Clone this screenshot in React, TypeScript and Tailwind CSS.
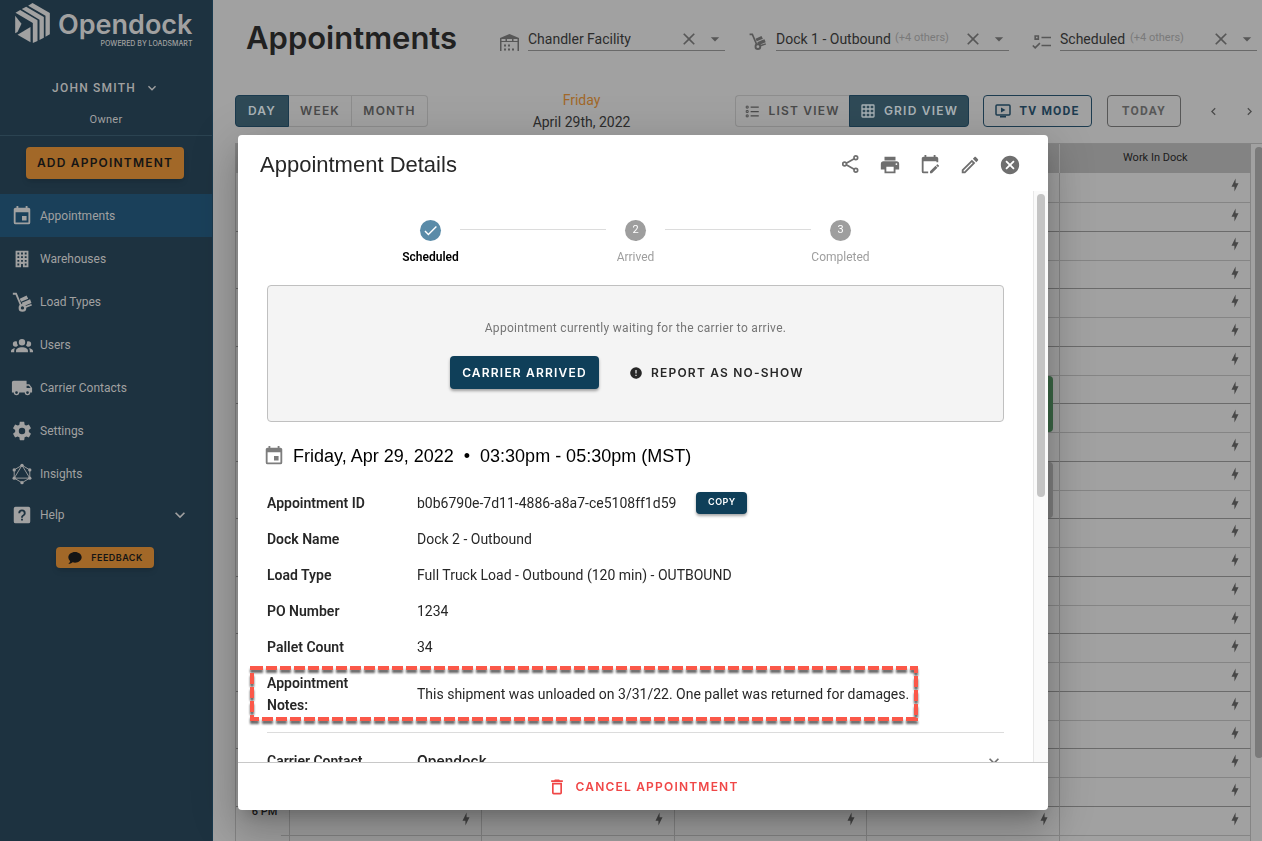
import React, { useState } from 'react';

const paths = {
  calendar: 'M19,19H5V8H19M16,1V3H8V1H6V3H5C3.89,3 3,3.89 3,5V19A2,2 0 0,0 5,21H19A2,2 0 0,0 21,19V5C21,3.89 20.1,3 19,3H18V1M17,12H12V17H17V12Z',
  building: 'M5,3V21H11V17.5H13V21H19V3H5M7,5H9V7H7V5M11,5H13V7H11V5M15,5H17V7H15V5M7,9H9V11H7V9M11,9H13V11H11V9M15,9H17V11H15V9M7,13H9V15H7V13M11,13H13V15H11V13M15,13H17V15H15V13M7,17H9V19H7V17M15,17H17V19H15V17Z',
  users: 'M12,5.5A3.5,3.5 0 0,1 15.5,9A3.5,3.5 0 0,1 12,12.5A3.5,3.5 0 0,1 8.5,9A3.5,3.5 0 0,1 12,5.5M5,8C5.56,8 6.08,8.15 6.53,8.42C6.38,9.85 6.8,11.27 7.66,12.38C7.16,13.34 6.16,14 5,14A3,3 0 0,1 2,11A3,3 0 0,1 5,8M19,8A3,3 0 0,1 22,11A3,3 0 0,1 19,14C17.84,14 16.84,13.34 16.34,12.38C17.2,11.27 17.62,9.85 17.47,8.42C17.92,8.15 18.44,8 19,8M5.5,18.25C5.5,16.18 8.41,14.5 12,14.5C15.59,14.5 18.5,16.18 18.5,18.25V20H5.5V18.25M0,20V18.5C0,17.11 1.89,15.94 4.45,15.6C3.86,16.28 3.5,17.22 3.5,18.25V20H0M24,20H20.5V18.25C20.5,17.22 20.14,16.28 19.55,15.6C22.11,15.94 24,17.11 24,18.5V20Z',
  truck: 'M18,18.5A1.5,1.5 0 0,1 16.5,17A1.5,1.5 0 0,1 18,15.5A1.5,1.5 0 0,1 19.5,17A1.5,1.5 0 0,1 18,18.5M19.5,9.5L21.46,12H17V9.5M6,18.5A1.5,1.5 0 0,1 4.5,17A1.5,1.5 0 0,1 6,15.5A1.5,1.5 0 0,1 7.5,17A1.5,1.5 0 0,1 6,18.5M20,8H17V4H3C1.89,4 1,4.89 1,6V17H3A3,3 0 0,0 6,20A3,3 0 0,0 9,17H15A3,3 0 0,0 18,20A3,3 0 0,0 21,17H23V12L20,8Z',
  cog: 'M12,15.5A3.5,3.5 0 0,1 8.5,12A3.5,3.5 0 0,1 12,8.5A3.5,3.5 0 0,1 15.5,12A3.5,3.5 0 0,1 12,15.5M19.43,12.97C19.47,12.65 19.5,12.33 19.5,12C19.5,11.67 19.47,11.34 19.43,11L21.54,9.37C21.73,9.22 21.78,8.95 21.66,8.73L19.66,5.27C19.54,5.05 19.27,4.96 19.05,5.05L16.56,6.05C16.04,5.66 15.5,5.32 14.87,5.07L14.5,2.42C14.46,2.18 14.25,2 14,2H10C9.75,2 9.54,2.18 9.5,2.42L9.13,5.07C8.5,5.32 7.96,5.66 7.44,6.05L4.95,5.05C4.73,4.96 4.46,5.05 4.34,5.27L2.34,8.73C2.21,8.95 2.27,9.22 2.46,9.37L4.57,11C4.53,11.34 4.5,11.67 4.5,12C4.5,12.33 4.53,12.65 4.57,12.97L2.46,14.63C2.27,14.78 2.21,15.05 2.34,15.27L4.34,18.73C4.46,18.95 4.73,19.03 4.95,18.95L7.44,17.94C7.96,18.34 8.5,18.68 9.13,18.93L9.5,21.58C9.54,21.82 9.75,22 10,22H14C14.25,22 14.46,21.82 14.5,21.58L14.87,18.93C15.5,18.67 16.04,18.34 16.56,17.94L19.05,18.95C19.27,19.03 19.54,18.95 19.66,18.73L21.66,15.27C21.78,15.05 21.73,14.78 21.54,14.63L19.43,12.97Z',
  help: 'M11,18H13V16H11V18M12,6A4,4 0 0,0 8,10H10A2,2 0 0,1 12,8A2,2 0 0,1 14,10C14,12 11,11.75 11,15H13C13,12.75 16,12.5 16,10A4,4 0 0,0 12,6M5,3H19A2,2 0 0,1 21,5V19A2,2 0 0,1 19,21H5A2,2 0 0,1 3,19V5A2,2 0 0,1 5,3Z',
  chat: 'M12,3C17.5,3 22,6.58 22,11C22,15.42 17.5,19 12,19C10.76,19 9.57,18.82 8.47,18.5C5.55,21 2,21 2,21C4.33,18.67 4.7,17.1 4.75,16.5C3.05,15.07 2,13.14 2,11C2,6.58 6.5,3 12,3Z',
  chevronDown: 'M7.41,8.58L12,13.17L16.59,8.58L18,10L12,16L6,10L7.41,8.58Z',
  chevronLeft: 'M15.41,16.58L10.83,12L15.41,7.41L14,6L8,12L14,18L15.41,16.58Z',
  chevronRight: 'M8.59,16.58L13.17,12L8.59,7.41L10,6L16,12L10,18L8.59,16.58Z',
  menuDown: 'M7,10L12,15L17,10H7Z',
  close: 'M19,6.41L17.59,5L12,10.59L6.41,5L5,6.41L10.59,12L5,17.59L6.41,19L12,13.41L17.59,19L19,17.59L13.41,12L19,6.41Z',
  printer: 'M18,3H6V7H18M19,12A1,1 0 0,1 18,11A1,1 0 0,1 19,10A1,1 0 0,1 20,11A1,1 0 0,1 19,12M16,19H8V14H16M19,8H5A3,3 0 0,0 2,11V17H6V21H18V17H22V11A3,3 0 0,0 19,8Z',
  calendarEdit: 'M19,3H18V1H16V3H8V1H6V3H5C3.89,3 3,3.9 3,5V19A2,2 0 0,0 5,21H10V19H5V8H19V9H21V5A2,2 0 0,0 19,3M21.7,13.35L20.7,14.35L18.65,12.35L19.65,11.35C19.85,11.14 20.19,11.13 20.42,11.35L21.7,12.63C21.89,12.83 21.89,13.15 21.7,13.35M12,18.94L18.07,12.88L20.12,14.88L14.06,21H12V18.94Z',
  pencil: 'M14.06,9L15,9.94L5.92,19H5V18.08L14.06,9M17.66,3C17.41,3 17.15,3.1 16.96,3.29L15.13,5.12L18.88,8.87L20.71,7.04C21.1,6.65 21.1,6 20.71,5.63L18.37,3.29C18.17,3.09 17.92,3 17.66,3M14.06,6.19L3,17.25V21H6.75L17.81,9.94L14.06,6.19Z',
  closeCircle: 'M12,2C17.53,2 22,6.47 22,12C22,17.53 17.53,22 12,22C6.47,22 2,17.53 2,12C2,6.47 6.47,2 12,2M15.59,7L12,10.59L8.41,7L7,8.41L10.59,12L7,15.59L8.41,17L12,13.41L15.59,17L17,15.59L13.41,12L17,8.41L15.59,7Z',
  alert: 'M13,13H11V7H13M13,17H11V15H13M12,2A10,10 0 0,0 2,12A10,10 0 0,0 12,22A10,10 0 0,0 22,12A10,10 0 0,0 12,2Z',
  trash: 'M6,19A2,2 0 0,0 8,21H16A2,2 0 0,0 18,19V7H6V19M8,9H16V19H8V9M15.5,4L14.5,3H9.5L8.5,4H5V6H19V4H15.5Z',
  grid: 'M10,4V8H14V4H10M16,4V8H20V4H16M16,10V14H20V10H16M16,16V20H20V16H16M14,20V16H10V20H14M8,20V16H4V20H8M8,14V10H4V14H8M8,8V4H4V8H8M10,14H14V10H10V14M4,2H20A2,2 0 0,1 22,4V20A2,2 0 0,1 20,22H4C2.92,22 2,21.1 2,20V4A2,2 0 0,1 4,2Z',
  check: 'M21,7L9,19L3.5,13.5L4.91,12.09L9,16.17L19.59,5.59L21,7Z',
  flash: 'M11 15H6L13 1V9H18L11 23V15Z',
};

function Icon({ name, size = 22, className = '' }: { name: keyof typeof paths; size?: number; className?: string }) {
  return (
    <svg viewBox="0 0 24 24" width={size} height={size} fill="currentColor" fillRule="evenodd" aria-hidden="true" className={`shrink-0 ${className}`}>
      <path d={paths[name]} />
    </svg>
  );
}

// stroked icons share one wrapper
function Line({ size = 22, width = 2, className = '', children }: { size?: number; width?: number; className?: string; children: React.ReactNode }) {
  return (
    <svg viewBox="0 0 24 24" width={size} height={size} fill="none" stroke="currentColor" strokeWidth={width} aria-hidden="true" className={`shrink-0 ${className}`}>
      {children}
    </svg>
  );
}

const Dolly = ({ size = 22 }: { size?: number }) => (
  <Line size={size} width={2}>
    <path d="M2 3H5.5L11 16" />
    <circle cx="12.5" cy="18.5" r="3" strokeWidth="2.4" />
    <path d="M15.5 17.5L22.5 15" />
    <path d="M9.5 8.5L17 5L18.8 8.5L11 11.8Z M11.8 12.8L20.8 9L22.3 13L13.5 16.5Z" fill="currentColor" stroke="none" />
  </Line>
);

const Insights = () => (
  <Line width={1}>
    <path d="M12 2.5L20.5 7.5V16.5L12 21.5L3.5 16.5V7.5Z M12 2.5L20.5 16.5H3.5Z" />
    <g fill="currentColor" stroke="none">
      <circle cx="12" cy="2.5" r="1.8" />
      <circle cx="20.5" cy="7.5" r="1.8" />
      <circle cx="20.5" cy="16.5" r="1.8" />
      <circle cx="12" cy="21.5" r="1.8" />
      <circle cx="3.5" cy="16.5" r="1.8" />
      <circle cx="3.5" cy="7.5" r="1.8" />
    </g>
  </Line>
);

const Warehouse = () => (
  <svg viewBox="0 0 19 17" width="19" height="17" fill="currentColor" aria-hidden="true" className="shrink-0">
    <path fillRule="evenodd" d="M0 4L9.5 0L19 4V17H17.5V8H1.5V17H0Z M1.5 5V7H5.5V5Z M7 5V7H12V5Z M13.5 5V7H17.5V5Z" />
    <path d="M4 10.5h2v2H4z M8 10.5h2v2H8z M4 14.5h2v2H4z M8 14.5h2v2H8z M12 14.5h2v2h-2z" />
  </svg>
);

const Checklist = () => (
  <Line size={19}>
    <path d="M4 5H8V9H4Z M12 7H24 M12 17H24 M1 17L4 20L10 14" />
  </Line>
);

function Logo() {
  return (
    <a href="#" aria-label="Opendock home" className="flex h-16 items-start gap-2 pt-[3px] pl-[15px] text-[#a1a1a1]">
      <svg viewBox="0 0 104 120" width="35" height="40" fill="currentColor" aria-hidden="true" className="shrink-0">
        <path d="M39 8L52 0L104 30V94L91 101V38Z" />
        <path d="M20 18L33 11L86 42V104L73 111V50Z" />
        <path d="M1 29L15 21L67 52V114L53 120V60Z" />
        <path d="M0 38L19 62L7 87L0 91Z" />
        <path d="M7 95L46 72V118Z" />
      </svg>
      <span className="flex flex-col items-end">
        <span className="mt-[7px] font-[Inter,sans-serif] text-[27px] leading-[30px] font-semibold">Opendock</span>
        <span className="font-[Inter,sans-serif] text-[7px] leading-2 font-medium">POWERED BY LOADSMART</span>
      </span>
    </a>
  );
}

const navItems = [
  { label: 'Appointments', icon: <Icon name="calendar" />, active: true },
  { label: 'Warehouses', icon: <Icon name="building" /> },
  { label: 'Load Types', icon: <Dolly /> },
  { label: 'Users', icon: <Icon name="users" /> },
  { label: 'Carrier Contacts', icon: <Icon name="truck" /> },
  { label: 'Settings', icon: <Icon name="cog" /> },
  { label: 'Insights', icon: <Insights /> },
];

function Sidebar() {
  return (
    <aside className="flex w-[213px] shrink-0 flex-col border-r border-[#1a3a4e] bg-[#1d3240] text-[#a1a1a1]">
      <Logo />
      <div className="flex flex-col items-center border-b border-[#2b4351] pt-3 pb-[5px]">
        <button className="flex items-center gap-2 text-xs leading-6 font-medium tracking-widest">
          JOHN SMITH
          <Icon name="chevronDown" size={16} />
        </button>
        <span className="mt-2.5 text-[11px] leading-5 tracking-wide">Owner</span>
      </div>
      <button className="mt-[11px] ml-[26px] flex h-8 w-[158px] items-center justify-center rounded bg-[#a26828] font-[Inter,sans-serif] text-xs font-semibold tracking-widest whitespace-nowrap text-[#151515] shadow-md">
        ADD APPOINTMENT
      </button>
      <nav className="mt-[15px] flex flex-col text-xs">
        {navItems.map((item) => (
          <a
            key={item.label}
            href="#"
            className={`flex h-[43px] items-center gap-[7px] pl-[11px] ${item.active ? 'bg-[#1a405a]' : ''}`}
          >
            {item.icon}
            {item.label}
          </a>
        ))}
        <button className="flex h-10 items-center gap-[7px] pr-[22px] pl-[11px]">
          <Icon name="help" />
          Help
          <Icon name="chevronDown" size={20} className="ml-auto" />
        </button>
      </nav>
      <button className="mt-3 ml-14 flex h-[21px] w-[98px] items-center justify-center gap-2 rounded bg-[#a26828] font-[Inter,sans-serif] text-[9px] font-semibold tracking-wider text-[#151515] shadow-md">
        <Icon name="chat" size={16} />
        FEEDBACK
      </button>
    </aside>
  );
}

interface FilterProps {
  label: string;
  value: string;
  others?: string;
  icon: React.ReactNode;
  className: string;
}

function Filter({ label, value, others, icon, className }: FilterProps) {
  return (
    <div className={`flex items-end gap-[9px] text-[#575757] ${className}`}>
      {icon}
      <div className="flex h-6 flex-1 items-center border-b border-[#696969]">
        <select aria-label={label} className="appearance-none bg-transparent text-sm leading-5 text-[#2c2c2c]">
          <option>{value}</option>
        </select>
        {others && <span className="ml-1 text-[11px] whitespace-nowrap text-[#7a7a7a]">{others}</span>}
        <button aria-label={`Clear ${label}`} className="ml-auto">
          <Icon name="close" size={20} />
        </button>
        <Icon name="menuDown" size={20} className="ml-1.5" />
      </div>
    </div>
  );
}

const toolButton = 'flex h-8 items-center justify-center text-xs tracking-widest whitespace-nowrap';
const toggle = `${toolButton} font-[Inter,sans-serif] font-semibold`;

function Toolbar() {
  return (
    <div className="mt-[9px] flex items-start pr-[3px] pl-[22px] text-[#4a4a4a]">
      <div className="flex">
        <button className={`${toggle} w-[54px] rounded-l border border-[#1a3a4e] bg-[#2f4a57] text-[#a9b2b6]`}>DAY</button>
        <button className={`${toggle} w-[63px] border-y border-r border-[#8d8d8d]`}>WEEK</button>
        <button className={`${toggle} w-[76px] rounded-r border-y border-r border-[#8d8d8d]`}>MONTH</button>
      </div>
      <div className="-mt-1.5 flex-1 text-center text-sm leading-[22px] text-[#2c2c2c]">
        <p className="text-[#a26828]">Friday</p>
        <p>April 29th, 2022</p>
      </div>
      <div className="flex">
        <button className={`${toggle} w-[114px] gap-2 rounded-l border-y border-l border-[#8d8d8d]`}>
          <Line size={15}>
            <path d="M9 5H22 M9 12H22 M9 19H22" />
            <path strokeWidth={1.5} d="M2 3.5H5V6.5H2Z M2 10.5H5V13.5H2Z M2 17.5H5V20.5H2Z" />
          </Line>
          LIST VIEW
        </button>
        <button className={`${toggle} w-[120px] gap-2 rounded-r border border-[#1a3a4e] bg-[#2f4a57] text-[#a9b2b6]`}>
          <Icon name="grid" size={16} />
          GRID VIEW
        </button>
      </div>
      <button className={`${toolButton} ml-3.5 w-[109px] gap-2 rounded border border-[#1d3c50] font-bold text-[#1d3c50]`}>
        <svg viewBox="0 0 16 14" width="16" height="14" fill="none" stroke="currentColor" strokeWidth="1.5" aria-hidden="true">
          <rect x="1" y="1" width="14" height="10" rx="1" />
          <path d="M6 3.5V8.5L10.5 6Z M5 12H11V13.5H5Z" fill="currentColor" stroke="none" />
        </svg>
        TV MODE
      </button>
      <button className={`${toolButton} ml-[15px] w-[74px] rounded border border-[#575757] font-bold text-[#575757]`}>TODAY</button>
      <button aria-label="Previous day" className="ml-[22px] flex h-8 w-5 items-center justify-center">
        <Icon name="chevronLeft" size={15} />
      </button>
      <button aria-label="Next day" className="ml-4 flex h-8 w-5 items-center justify-center">
        <Icon name="chevronRight" size={15} />
      </button>
    </div>
  );
}

const hours = ['7 AM', '8 AM', '9 AM', '10 AM', '11 AM', '12 PM', '1 PM', '2 PM', '3 PM', '4 PM', '5 PM', '6 PM'];
const docks = ['Dock 1', 'Dock 2', 'Dock 3', 'Dock 4'];

function SlotCells({ row, dark }: { row: number; dark: boolean }) {
  return (
    <>
      {[...docks, 'Work In Dock'].map((dock, col) => (
        <td
          key={dock}
          className={`relative border-b p-0 align-top ${dark ? 'border-b-[#6b6b6b]' : 'border-b-[#858585]'} ${col === 4 ? 'border-r' : ''} border-l border-x-[#858585]`}
        >
          <Icon name="flash" size={14} className="mt-[5px] mr-2 ml-auto text-[#474747]" />
          {col === 3 && row === 7 && <div className="absolute inset-x-0 top-0 mr-1.5 h-14 rounded bg-[#3a6645]" />}
          {col === 3 && row === 10 && <div className="absolute inset-x-0 top-0 mr-1.5 h-14 rounded bg-[#7f7f7f]" />}
        </td>
      ))}
    </>
  );
}

function Schedule() {
  return (
    <div className="mt-2.5 flex min-h-0 flex-1 overflow-hidden pl-[22px]">
      <table className="h-fit w-full flex-1 table-fixed border-separate border-spacing-0 border-t border-l border-[#858585] text-[#1c1c1c]">
        <colgroup>
          <col className="w-[45px]" />
          <col className="w-2" />
          <col span={5} />
        </colgroup>
        <thead>
          <tr className="h-[29px] bg-[#838383]">
            <th colSpan={2} />
            {[...docks, 'Work In Dock'].map((dock) => (
              <th key={dock} className="border-l border-[#9a9a9a] text-[11px] font-normal">{dock}</th>
            ))}
          </tr>
        </thead>
        <tbody>
          {hours.map((hour, i) => (
            <React.Fragment key={hour}>
              <tr className={i === 0 ? 'h-[30px]' : 'h-[29px]'}>
                <td rowSpan={2} className="border-b border-[#6b6b6b] p-0 pl-3 text-center align-top text-[11px] leading-[10px] font-medium whitespace-nowrap">{hour}</td>
                <td className="border-b border-[#858585] p-0" />
                <SlotCells row={i * 2} dark={false} />
              </tr>
              <tr className={i % 2 ? 'h-7' : 'h-[29px]'}>
                <td className="border-b border-[#6b6b6b] p-0" />
                <SlotCells row={i * 2 + 1} dark />
              </tr>
            </React.Fragment>
          ))}
        </tbody>
      </table>
      <div className="w-[11px] shrink-0 overflow-hidden border-t border-[#858585] pt-[3px] pl-1">
        <div className="h-[611px] w-2 rounded bg-[#7a7a7a]" />
      </div>
    </div>
  );
}

const steps = ['Scheduled', 'Arrived', 'Completed'];

function Stepper() {
  return (
    <ol className="mx-auto flex max-w-[469px] items-start">
      {steps.map((step, i) => (
        <React.Fragment key={step}>
          {i > 0 && <li aria-hidden="true" className="mt-[9px] h-px flex-1 bg-[#dcdcdc]" />}
          <li className="flex w-[59px] flex-col items-center">
            <span className={`flex size-[21px] items-center justify-center rounded-full text-[11px] text-white ${i === 0 ? 'bg-[#5a8ba8]' : 'bg-[#9e9e9e]'}`}>
              {i === 0 ? <Icon name="check" size={17} /> : i + 1}
            </span>
            <span className={`mt-1.5 text-xs leading-5 ${i === 0 ? 'font-semibold text-black' : 'text-[#9e9e9e]'}`}>{step}</span>
          </li>
        </React.Fragment>
      ))}
    </ol>
  );
}

const details = [
  ['Dock Name', 'Dock 2 - Outbound'],
  ['Load Type', 'Full Truck Load - Outbound (120 min) - OUTBOUND'],
  ['PO Number', '1234'],
  ['Pallet Count', '34'],
];

function AppointmentDialog({ onClose }: { onClose: () => void }) {
  const raised = 'rounded bg-[#0f3f59] font-[Inter,sans-serif] font-semibold text-white shadow-[0_2px_3px_rgba(0,0,0,0.35)]';

  return (
    <div className="fixed inset-0 flex pt-[135px] pr-[214px] pb-[31px] pl-[238px]">
      <section
        role="dialog"
        aria-labelledby="dialog-title"
        className="flex min-w-0 flex-1 flex-col overflow-hidden rounded bg-white text-[#272727] shadow-[0_11px_15px_-7px_rgba(0,0,0,0.2),0_24px_38px_3px_rgba(0,0,0,0.14),0_9px_46px_8px_rgba(0,0,0,0.12)]"
      >
        <header className="flex h-14 shrink-0 items-center pt-0.5 pr-[18px] pl-[22px]">
          <h2 id="dialog-title" className="flex-1 font-['Liberation_Sans',sans-serif] text-[22px]">Appointment Details</h2>
          <div className="flex pt-0.5 text-[#6f6f6f]">
            <button aria-label="Share" className="flex w-10 justify-center">
              <Line size={20}>
                <circle cx="19" cy="4.5" r="2.2" />
                <circle cx="5.5" cy="12" r="2.2" />
                <circle cx="19" cy="19.5" r="2.2" />
                <path d="M7.5 11L17 5.6 M7.5 13L17 18.4" />
              </Line>
            </button>
            <button aria-label="Print" className="flex w-10 justify-center"><Icon name="printer" /></button>
            <button aria-label="Reschedule" className="flex w-10 justify-center"><Icon name="calendarEdit" /></button>
            <button aria-label="Edit" className="flex w-10 justify-center"><Icon name="pencil" /></button>
            <button aria-label="Close" onClick={onClose} className="flex w-10 justify-center"><Icon name="closeCircle" /></button>
          </div>
        </header>

        <div className="flex min-h-0 flex-1 overflow-hidden">
          <div className="min-w-0 flex-1 px-[29px] pt-[29px]">
            <Stepper />

            <div className="mt-[18px] flex flex-col items-center rounded border border-[#c0c0c0] bg-[#f4f4f4] py-8">
              <p className="text-xs leading-5 tracking-wide text-[#757575]">Appointment currently waiting for the carrier to arrive.</p>
              <div className="mt-[18px] flex gap-4">
                <button className={`${raised} h-[33px] w-[149px] text-xs tracking-widest whitespace-nowrap`}>CARRIER ARRIVED</button>
                <button className="flex h-[33px] w-[206px] items-center pl-3.5 gap-2 font-[Inter,sans-serif] text-xs font-semibold tracking-widest whitespace-nowrap">
                  <Icon name="alert" size={14} />
                  REPORT AS NO-SHOW
                </button>
              </div>
            </div>

            <h3 className="mt-5 flex h-7 items-center font-['Liberation_Sans',sans-serif] text-lg text-black">
              <Icon name="calendar" className="mr-2 -ml-1 text-[#7d7d7d]" />
              Friday, Apr 29, 2022
              <span className="mx-2.5">•</span>
              03:30pm - 05:30pm (MST)
            </h3>

            <dl className="mt-3.5 text-sm">
              <div className="flex h-[37px] items-center">
                <dt className="w-[150px] font-semibold">Appointment ID</dt>
                <dd className="flex items-center gap-5">
                  b0b6790e-7d11-4886-a8a7-ce5108ff1d59
                  <button className={`${raised} h-[22px] w-[51px] text-[9px] tracking-wider`}>COPY</button>
                </dd>
              </div>
              {details.map(([label, value]) => (
                <div key={label} className="flex h-9 items-center">
                  <dt className="w-[150px] font-semibold">{label}</dt>
                  <dd>{value}</dd>
                </div>
              ))}
              <div className="relative flex items-center py-[7px] leading-[22px]">
                <dt className="w-[150px] pr-10 font-semibold">Appointment Notes:</dt>
                <dd>This shipment was unloaded on 3/31/22. One pallet was returned for damages.</dd>
                {/* red marker around the notes */}
                <svg className="absolute top-px -left-[17px] h-[55px] w-[668px] overflow-visible drop-shadow-[0_3px_1px_rgba(0,0,0,0.6)]" aria-hidden="true">
                  <rect x="2" y="2" width="664" height="51" fill="none" stroke="#fb5849" strokeWidth="4" strokeDasharray="11 3" />
                </svg>
              </div>
            </dl>

            <div className="mt-[9px] flex border-t border-[#dcdcdc] pt-[18px] text-sm leading-5 font-semibold">
              <span className="w-[150px]">Carrier Contact</span>
              <span className="flex-1 font-[Inter,sans-serif]">Opendock</span>
              <Icon name="chevronDown" size={20} className="text-[#6f6f6f]" />
            </div>
          </div>
          <div className="w-[15px] shrink-0 border-l border-[#e8e8e8] bg-[#fafafa] px-[3px] pt-[3px]">
            <div className="h-[303px] w-2 rounded bg-[#c4c4c4]" />
          </div>
        </div>

        <footer className="flex h-12 shrink-0 items-center justify-center border-t border-[#c8c8c8]">
          <button className="flex items-center gap-2 font-[Inter,sans-serif] text-xs font-semibold tracking-widest text-[#f04747]">
            <Icon name="trash" size={20} />
            CANCEL APPOINTMENT
          </button>
        </footer>
      </section>
    </div>
  );
}

export default function App() {
  const [open, setOpen] = useState(true);

  return (
    <div className="flex h-screen overflow-hidden bg-[#a1a1a1] font-[Roboto,sans-serif]">
      <Sidebar />
      <main className="flex min-w-0 flex-1 flex-col">
        <div className="flex h-[86px] items-start pr-[5px] pl-[33px]">
          <h1 className="w-[254px] pt-[14px] font-[Inter,sans-serif] text-[31px] leading-12 font-semibold text-[#212121]">Appointments</h1>
          <div className="flex flex-1 gap-[23px] pt-[27px]">
            <Filter label="Facility" value="Chandler Facility" icon={<Warehouse />} className="w-[225px]" />
            <Filter label="Dock" value="Dock 1 - Outbound" others="(+4 others)" icon={<Dolly size={19} />} className="flex-1" />
            <Filter label="Status" value="Scheduled" others="(+4 others)" icon={<Checklist />} className="w-[225px]" />
          </div>
        </div>
        <Toolbar />
        <Schedule />
      </main>
      {open && <AppointmentDialog onClose={() => setOpen(false)} />}
    </div>
  );
}
